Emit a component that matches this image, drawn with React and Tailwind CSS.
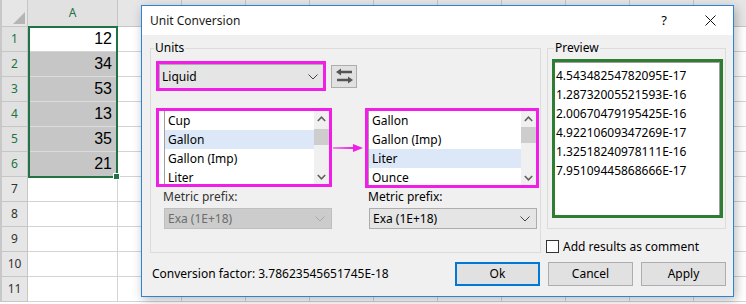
import React from "react";

const cols = ["B", "C", "D", "E", "F", "G", "H", "I", "J", "K"];
const data = [12, 34, 53, 13, 35, 21];

function Chevron({ color = "#444" }) {
  return (
    <svg width="10" height="6" viewBox="0 0 10 6">
      <polyline points="0.5,0.5 5,5 9.5,0.5" fill="none" stroke={color} strokeWidth="1" />
    </svg>
  );
}

function ScrollArrow({ up }) {
  return (
    <svg width="9" height="6" viewBox="0 0 9 6">
      <polyline
        points={up ? "0.8,5 4.5,1.2 8.2,5" : "0.8,1 4.5,4.8 8.2,1"}
        fill="none"
        stroke="#606060"
        strokeWidth="1.6"
      />
    </svg>
  );
}

function Scrollbar({ thumbTop }) {
  return (
    <div className="w-[15px] h-full bg-[#f0f0f0] flex flex-col items-center">
      <div className="h-[15px] w-full flex items-center justify-center">
        <ScrollArrow up />
      </div>
      <div className="w-full flex-1 flex flex-col">
        <div className={thumbTop ? "h-[1px]" : "h-[3px]"} />
        <div className="h-[16px] w-full bg-[#cdcdcd]" />
      </div>
      <div className="h-[15px] w-full flex items-center justify-center">
        <ScrollArrow />
      </div>
    </div>
  );
}

function ListItems({ items, selected }) {
  return (
    <div className="flex-1 flex flex-col">
      {items.map((it, i) => (
        <div
          key={it}
          className={
            "h-[19px] leading-[19px] pl-[3px] whitespace-nowrap " +
            (i === selected ? "bg-[#dce8f8]" : "")
          }
        >
          {it}
        </div>
      ))}
    </div>
  );
}

export default function App() {
  return (
    <div className="relative w-[746px] h-[304px] overflow-hidden bg-white">
      {/* Excel sheet */}
      <div className="grid grid-cols-[28px_90px_repeat(10,64px)] grid-rows-[27px_repeat(11,25px)] font-['Noto_Sans',sans-serif]">
        <div className="bg-[#e6e6e6] border-r border-b border-[#c6c6c6] border-l-2 border-l-[#c8c8c8] flex items-end justify-end pr-[2px] pb-[2px]">
          <svg width="12" height="12" viewBox="0 0 12 12">
            <polygon points="12,0 12,12 0,12" fill="#b5b5b5" />
          </svg>
        </div>
        <div className="bg-[#e1e1e1] border-r border-b border-[#c6c6c6] flex items-center justify-center text-[12px] text-[#217346]">
          A
        </div>
        {cols.map((c) => (
          <div key={c} className="bg-[#e6e6e6] border-r border-b border-[#c6c6c6]" />
        ))}
        {Array.from({ length: 11 }, (_, r) => (
          <React.Fragment key={r}>
            <div
              className={
                "border-r border-b border-[#c6c6c6] border-l-2 border-l-[#c8c8c8] flex items-center justify-center text-[12px] " +
                (r < 6 ? "bg-[#e1e1e1] text-[#217346]" : "bg-[#e6e6e6] text-[#333]")
              }
            >
              {r + 1}
            </div>
            <div
              className={
                "border-r border-b flex items-center justify-end pr-[5px] text-[16px] font-['Liberation_Sans',sans-serif] text-black " +
                (r === 0
                  ? "bg-white border-[#d4d4d4]"
                  : r < 6
                  ? "bg-[#c6c6c6] border-[#dcdcdc]"
                  : "bg-white border-[#d4d4d4]")
              }
            >
              {r < 6 ? data[r] : ""}
            </div>
            {cols.map((c) => (
              <div key={c} className="bg-white border-r border-b border-[#d4d4d4]" />
            ))}
          </React.Fragment>
        ))}
      </div>
      {/* selection */}
      <div className="absolute left-[28px] top-[26px] w-[90px] h-[152px] border-2 border-[#217346]" />
      <div className="absolute left-[113px] top-[173px] w-[7px] h-[7px] bg-[#217346] border border-white" />

      {/* Dialog */}
      <div className="absolute left-[141px] top-[5px] w-[593px] h-[292px] border border-[#2a85d8] bg-[#f0f0f0] shadow-[2px_3px_10px_rgba(0,0,0,0.28)] font-['Noto_Sans',sans-serif] text-[12px] text-black flex flex-col">
        {/* title bar */}
        <div className="h-[29px] bg-white flex items-center">
          <div className="flex-1 pl-[8px] text-[12px] text-[#1a1a1a]">Unit Conversion</div>
          <div className="w-[46px] h-full flex items-center justify-center text-[13px] text-black">?</div>
          <div className="w-[46px] h-full flex items-center justify-center">
            <svg width="11" height="11" viewBox="0 0 11 11">
              <line x1="0.5" y1="0.5" x2="10.5" y2="10.5" stroke="#111" strokeWidth="1" />
              <line x1="10.5" y1="0.5" x2="0.5" y2="10.5" stroke="#111" strokeWidth="1" />
            </svg>
          </div>
        </div>

        {/* body */}
        <div className="flex flex-col pl-[8px] pr-[7px] pt-[13px]">
          <div className="flex gap-[6px]">
            {/* Units group */}
            <div className="relative w-[391px] h-[205px] border border-[#dcdcdc]">
              <div className="absolute left-[3px] top-[-9px] px-[1px] bg-[#f0f0f0] leading-[16px]">Units</div>
              <div className="flex flex-col pl-[5px] pt-[12px]">
                {/* row A */}
                <div className="flex items-center">
                  <div className="w-[170px] h-[30px] border-[3px] border-[#f11ee8]">
                    <div className="w-full h-full bg-[#e5e5e5] border border-[#adadad] border-r-0 border-b-0 flex items-center pl-[2px] pr-[5px]">
                      <span className="flex-1">Liquid</span>
                      <Chevron />
                    </div>
                  </div>
                  <div className="ml-[5px] w-[26px] h-[23px] bg-[#e1e1e1] border border-[#adadad] flex items-center justify-center">
                    <svg width="17" height="16" viewBox="0 0 17 16">
                      <polygon points="0,4 5,0.5 5,7.5" fill="#555" />
                      <rect x="4" y="2.75" width="12" height="2.5" fill="#555" />
                      <rect x="1" y="10.75" width="12" height="2.5" fill="#555" />
                      <polygon points="17,12 12,8.5 12,15.5" fill="#555" />
                    </svg>
                  </div>
                </div>
                {/* row B */}
                <div className="flex mt-[17px]">
                  <div className="w-[176px] h-[79px] border-[3px] border-[#f11ee8] bg-white flex">
                    <div className="w-[5px]" />
                    <div className="flex-1 flex border-l border-[#a0a0a0] overflow-hidden">
                      <ListItems items={["Cup", "Gallon", "Gallon (Imp)", "Liter"]} selected={1} />
                      <Scrollbar />
                    </div>
                  </div>
                  <div className="w-[33px] self-center flex items-center">
                    <svg width="33" height="10" viewBox="0 0 33 10">
                      <polygon points="1,4.6 22,4 22,6 1,5.4" fill="#f11ee8" />
                      <polygon points="21,1 31,5 21,9" fill="#f11ee8" />
                    </svg>
                  </div>
                  <div className="w-[174px] h-[80px] border-[3px] border-[#f11ee8] bg-white flex">
                    <div className="flex-1 flex border-l border-[#a0a0a0] overflow-hidden">
                      <ListItems items={["Gallon", "Gallon (Imp)", "Liter", "Ounce"]} selected={2} />
                      <Scrollbar thumbTop />
                    </div>
                  </div>
                </div>
                {/* row C */}
                <div className="flex mt-[1px] gap-[37px] pl-[8px]">
                  <div className="w-[168px] flex flex-col">
                    <div className="leading-[16px] ml-[-1px] text-[#333]">Metric prefix:</div>
                    <div className="mt-[3px] h-[21px] bg-[#cccccc] border border-[#bfbfbf] flex items-center pl-[3px] pr-[6px] text-[#6d6d6d]">
                      <span className="flex-1">Exa (1E+18)</span>
                      <Chevron color="#a8a8a8" />
                    </div>
                  </div>
                  <div className="w-[168px] flex flex-col">
                    <div className="leading-[16px] ml-[-1px]">Metric prefix:</div>
                    <div className="mt-[3px] h-[21px] bg-[#e5e5e5] border border-[#adadad] flex items-center pl-[3px] pr-[6px]">
                      <span className="flex-1">Exa (1E+18)</span>
                      <Chevron />
                    </div>
                  </div>
                </div>
              </div>
            </div>

            {/* right column */}
            <div className="w-[179px] flex flex-col">
              <div className="relative h-[181px] border border-[#dcdcdc]">
                <div className="absolute left-[6px] top-[-9px] px-[1px] bg-[#f0f0f0] leading-[16px]">Preview</div>
                <div className="ml-[4px] mt-[10px] w-[171px] h-[159px] border-[3px] border-[#2e7d32]">
                  <div className="w-full h-full bg-white border-t border-r border-[#a0a0a0] pl-[1px] pt-[3px] leading-[19px]">
                    <div>4.54348254782095E-17</div>
                    <div>1.28732005521593E-16</div>
                    <div>2.00670479195425E-16</div>
                    <div>4.92210609347269E-17</div>
                    <div>1.32518240978111E-16</div>
                    <div>7.95109445868666E-17</div>
                  </div>
                </div>
              </div>
              <div className="mt-[11px] ml-[-1px] flex items-center gap-[4px]">
                <div className="w-[13px] h-[13px] border border-[#333] bg-white" />
                <span className="leading-[13px]">Add results as comment</span>
              </div>
            </div>
          </div>

          {/* bottom row */}
          <div className="mt-[9px] flex items-center h-[24px]">
            <div className="flex-1 pl-[2px]">Conversion factor: 3.78623545651745E-18</div>
            <div className="flex gap-[8px]">
              <div className="w-[85px] h-[24px] border-2 border-[#0078d7] bg-[#e1e1e1] flex items-center justify-center">Ok</div>
              <div className="w-[85px] h-[24px] border border-[#adadad] bg-[#e1e1e1] flex items-center justify-center">Cancel</div>
              <div className="w-[85px] h-[24px] border border-[#adadad] bg-[#e1e1e1] flex items-center justify-center">Apply</div>
            </div>
          </div>
        </div>
      </div>
    </div>
  );
}
